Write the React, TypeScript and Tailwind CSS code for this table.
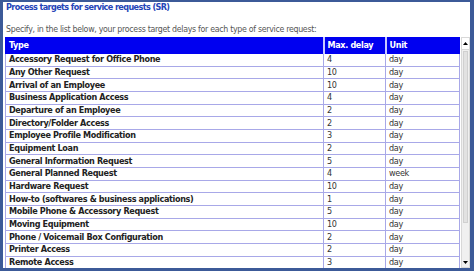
const rows: [string, number, string][] = [
  ["Accessory Request for Office Phone", 4, "day"],
  ["Any Other Request", 10, "day"],
  ["Arrival of an Employee", 10, "day"],
  ["Business Application Access", 4, "day"],
  ["Departure of an Employee", 2, "day"],
  ["Directory/Folder Access", 2, "day"],
  ["Employee Profile Modification", 3, "day"],
  ["Equipment Loan", 2, "day"],
  ["General Information Request", 5, "day"],
  ["General Planned Request", 4, "week"],
  ["Hardware Request", 10, "day"],
  ["How-to (softwares & business applications)", 1, "day"],
  ["Mobile Phone & Accessory Request", 5, "day"],
  ["Moving Equipment", 10, "day"],
  ["Phone / Voicemail Box Configuration", 2, "day"],
  ["Printer Access", 2, "day"],
  ["Remote Access", 3, "day"],
];

export default function App() {
  return (
    <div
      className="w-[474px] h-[271px] overflow-hidden bg-[#3c5a98] pl-[3px] pr-[4px] pt-[2px] pb-[3px]"
      style={{ fontFamily: '"DejaVu Sans Condensed", "DejaVu Sans", sans-serif' }}
    >
      <div className="h-full bg-white pl-[2px] flex flex-col overflow-hidden">
        <div className="text-[9px] font-bold text-[#2545b8] leading-[11px] pl-[1px] tracking-[-0.6px]">
          Process targets for service requests (SR)
        </div>
        <div className="text-[8.75px] text-[#555] leading-[11px] mt-[11px] pl-[1px] tracking-[-0.3px]">
          Specify, in the list below, your process target delays for each type of service request:
        </div>
        <div className="flex mt-[2px] flex-1 min-h-0">
          <table className="w-[454px] table-fixed border-collapse text-[9px] leading-[11px] self-start tracking-[-0.35px]">
            <colgroup>
              <col className="w-[318px]" />
              <col className="w-[62px]" />
              <col className="w-[74px]" />
            </colgroup>
            <thead>
              <tr className="bg-[#0000f0] text-white font-bold h-[16px]">
                <th className="text-left px-[3px] border border-[#0000f0]">Type</th>
                <th className="text-left px-[3px] border-l-2 border-l-[#c8c8ff] border-y border-[#0000f0] whitespace-nowrap">Max. delay</th>
                <th className="text-left px-[3px] border-l-2 border-l-[#c8c8ff] border-y border-[#0000f0]">Unit</th>
              </tr>
            </thead>
            <tbody>
              {rows.map(([type, delay, unit]) => (
                <tr key={type} className="h-[12.67px]">
                  <td className="px-[3px] py-0 font-bold text-[#222] border border-[#a8a8e8] whitespace-nowrap">{type}</td>
                  <td className="px-[3px] py-0 text-[#333] border border-[#a8a8e8]">{delay}</td>
                  <td className="px-[3px] py-0 text-[#333] border border-[#a8a8e8]">{unit}</td>
                </tr>
              ))}
            </tbody>
          </table>
          <div className="w-[12px] ml-[1px] flex flex-col bg-[#f0f0f0] border border-[#d8d8d8]">
            <div className="h-[12px] bg-white border-b border-[#d8d8d8] flex items-center justify-center">
              <svg width="5" height="3" viewBox="0 0 5 3"><path d="M2.5 0L5 3H0z" fill="#000" /></svg>
            </div>
            <div className="mx-[1px] mt-[1px] h-[172px] bg-[#e2e2e2] border border-[#d0d0d0]" />
            <div className="flex-1" />
            <div className="h-[10px] flex items-center justify-center">
              <svg width="5" height="3" viewBox="0 0 5 3"><path d="M0 0H5L2.5 3z" fill="#000" /></svg>
            </div>
          </div>
        </div>
      </div>
    </div>
  );
}
